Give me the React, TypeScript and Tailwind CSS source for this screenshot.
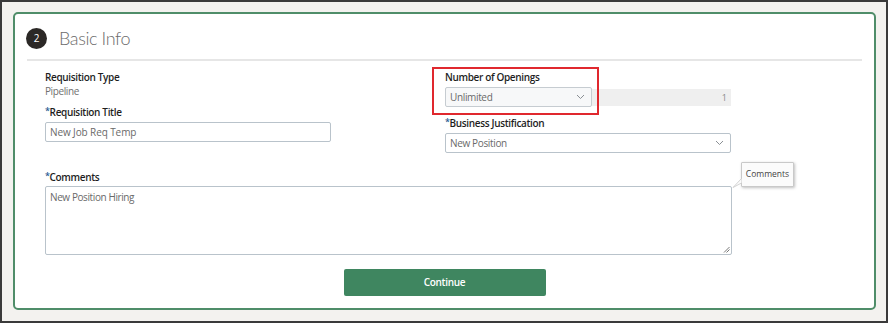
function Chevron() {
  return (
    <svg width="9" height="6" viewBox="0 0 9 6" className="text-[#8a8f94]">
      <path d="M1 1l3.5 3.5L8 1" fill="none" stroke="currentColor" strokeWidth="1" />
    </svg>
  );
}

function Label({ text, req }: { text: string; req?: boolean }) {
  return (
    <div className="h-[14px] leading-[14px] text-[10px] tracking-[-0.35px] font-semibold text-[#1e1e1e]">
      {req && <span className="text-[#2a5d94] text-[9px] align-top leading-[12px]">*</span>}
      {text}
    </div>
  );
}

export default function App() {
  return (
    <div className="w-[888px] h-[323px] bg-[#f3f2ef] border-2 border-[#3a3a3a] pt-[10px] pl-[11px] font-['Open_Sans',sans-serif]">
      <div className="relative w-[863px] h-[298px] bg-white border-2 border-[#4f8d69] rounded-[5px]">
        <div className="flex items-center pt-[12px] pl-[11px]">
          <div className="w-[21px] h-[21px] rounded-full bg-[#2b2826] text-white text-[10px] flex items-center justify-center">
            2
          </div>
          <div className="ml-[12px] text-[18px] tracking-[-0.4px] font-light text-[#6b6b6b] leading-[24px] font-['Lato',sans-serif]">
            Basic Info
          </div>
        </div>
        <div className="mx-[12px] mt-[9px] h-[2px] bg-[#e6e6e6]" />

        <div className="pl-[30px] pt-[9px]">
          <div className="flex">
            <div className="w-[400px] flex flex-col">
              <Label text="Requisition Type" />
              <div className="h-[14px] leading-[14px] text-[10px] tracking-[-0.4px] text-[#707070]">Pipeline</div>
              <div className="mt-[7px]">
                <Label text="Requisition Title" req />
              </div>
              <div className="mt-[3px] w-[286px] h-[20px] border border-[#b9c3cb] rounded-[2px] px-[4px] text-[10px] tracking-[-0.1px] font-medium leading-[18px] text-[#6a6a6a]">
                New Job Req Temp
              </div>
            </div>
            <div className="flex flex-col">
              <Label text="Number of Openings" />
              <div className="mt-[3px] flex items-center">
                <div className="w-[147px] h-[20px] border border-[#c6ccd1] bg-[#f7f8f9] rounded-[2px] pl-[4px] pr-[6px] flex items-center justify-between text-[10px] tracking-[-0.35px] font-medium text-[#6a6a6a]">
                  <span>Unlimited</span>
                  <Chevron />
                </div>
                <div className="w-[139px] h-[17px] bg-[#efefef] text-right pr-[4px] text-[9px] leading-[17px] text-[#8a8a8a]">1</div>
              </div>
              <div className="mt-[9px]">
                <Label text="Business Justification" req />
              </div>
              <div className="mt-[3px] w-[286px] h-[20px] border border-[#b9c3cb] rounded-[2px] pl-[4px] pr-[6px] flex items-center justify-between text-[10px] tracking-[-0.35px] font-medium text-[#6a6a6a]">
                <span>New Position</span>
                <Chevron />
              </div>
            </div>
          </div>

          <div className="mt-[17px]">
            <Label text="Comments" req />
          </div>
          <div className="relative mt-[2px] w-[687px] h-[69px] border border-[#b9c3cb] rounded-[2px] px-[4px] pt-[3px] text-[10px] tracking-[-0.4px] font-medium text-[#6a6a6a]">
            New Position Hiring
            <svg width="7" height="7" viewBox="0 0 7 7" className="absolute right-[1px] bottom-[1px]">
              <path d="M1 6.5L6.5 1M3.5 6.5L6.5 3.5" stroke="#555" strokeWidth="0.8" />
            </svg>
          </div>
        </div>

        <div className="mt-[14px] mx-auto w-[202px] h-[27px] bg-[#3f8660] rounded-[2px] flex items-center justify-center text-white text-[10px] tracking-[-0.3px] font-semibold">
          Continue
        </div>

        <div className="absolute left-[417px] top-[53px] w-[167px] h-[48px] border-2 border-[#e0282e]" />

        <div className="absolute left-[726px] top-[148px] w-[53px] h-[25px] bg-[#fbfbfb] border border-[#c9c9c9] shadow-[1px_1px_3px_rgba(0,0,0,0.25)] rounded-[1px] flex items-center justify-center text-[8.5px] text-[#444]">
          Comments
        </div>
        <svg width="10" height="10" viewBox="0 0 10 10" className="absolute left-[717px] top-[164px]">
          <path d="M9.5 0.5L1 9.5L9.5 5" fill="#fbfbfb" stroke="#c9c9c9" strokeWidth="0.8" />
        </svg>
      </div>
    </div>
  );
}
